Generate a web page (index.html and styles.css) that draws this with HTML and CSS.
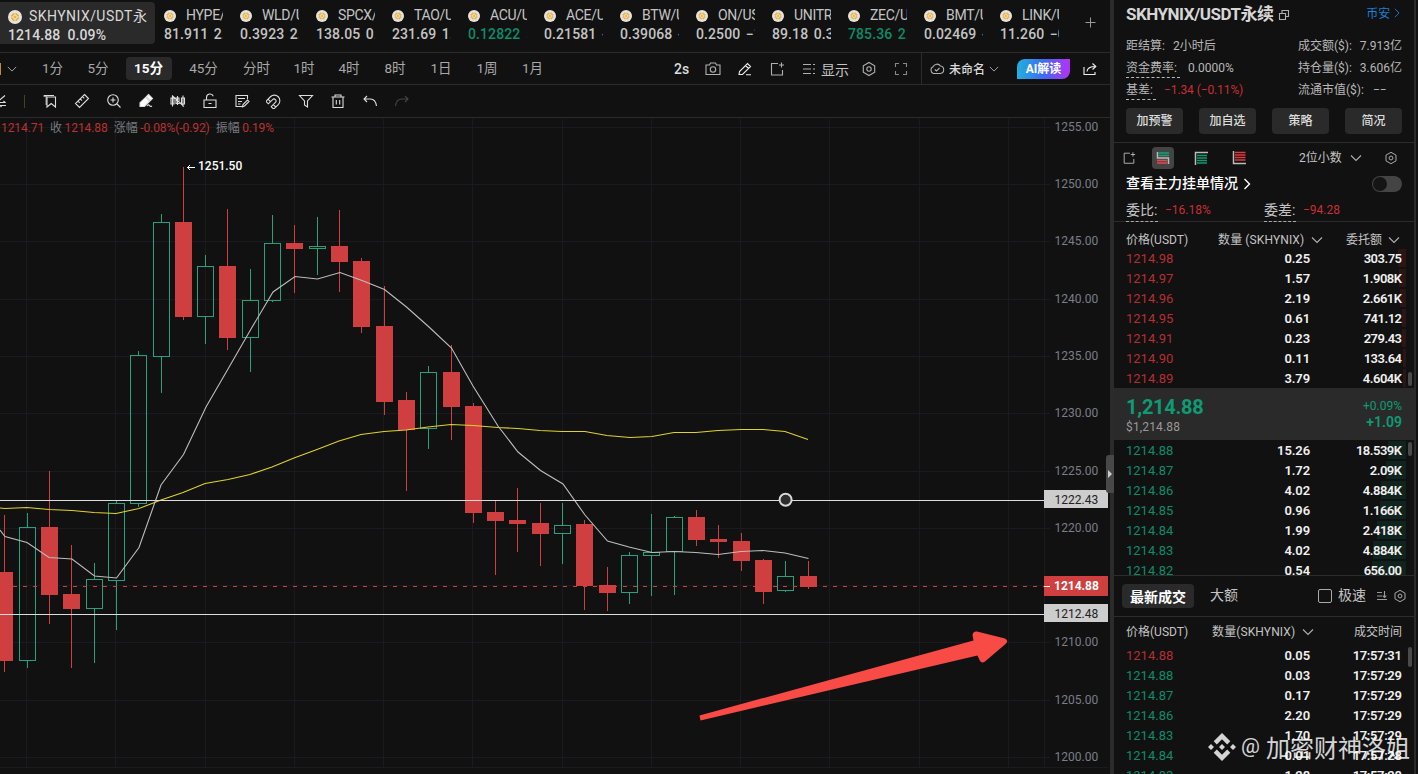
FILE: index.html
```html
<!DOCTYPE html>
<html lang="zh-CN">
<head>
<meta charset="utf-8">
<title>SKHYNIX/USDT永续</title>
<link rel="stylesheet" href="styles.css">
</head>
<body>
<svg class="defs" width="0" height="0">
  <symbol id="coin" viewBox="0 0 14 14"><circle cx="7" cy="7" r="7" fill="#e4e4e4"/><path d="M7 2.600 11.400 7 7 11.400 2.600 7Z" fill="none" stroke="#efb02c" stroke-width="1.700" stroke-dasharray="4.400 1.800" stroke-dashoffset="-.9"/><path d="M7 5.200 8.800 7 7 8.800 5.200 7Z" fill="#efb02c"/></symbol>
  <symbol id="chev" viewBox="0 0 12 12"><path d="M1 3.500 6 8.500 11 3.500"/></symbol>
  <symbol id="right" viewBox="0 0 12 12"><path d="M3.500 1 8.500 6 3.500 11"/></symbol>
  <symbol id="hex" viewBox="0 0 16 16"><path d="M8 1.500 13.700 4.700V11.300L8 14.500 2.300 11.300V4.700Z"/><circle cx="8" cy="8" r="2.200"/></symbol>
  <symbol id="boxplus" viewBox="0 0 16 16"><path d="M9 2.500H2.500V14H13.500V9M12.500 1.500V6.500M10 4H15"/></symbol>
  <symbol id="bookmark" viewBox="0 0 16 16"><path d="M1.500 2H5V12H3.500V4H1.500Z" fill="#999" stroke="none"/><path d="M2 2.500H12M5 4H13.500V14L9.200 10.500 5 14Z"/></symbol>
  <symbol id="ruler" viewBox="0 0 16 16"><path d="M10.500 1.500 14.500 5.500 5.500 14.500 1.500 10.500ZM8.500 3.700 10.200 5.400M6.300 5.900 8 7.600M4 8.200 5.700 9.900"/></symbol>
  <symbol id="zoomin" viewBox="0 0 16 16"><circle cx="7" cy="7" r="5.300"/><path d="M11 11 14.500 14.500M4.500 7H9.500M7 4.500V9.500"/></symbol>
  <symbol id="brush" viewBox="0 0 16 16"><path d="M10.500 1.500 14.500 5.500 12.500 7.500 8.500 3.500ZM7.800 4.300 11.700 8.200 6.500 13.500H2V9.800Z" fill="#fff"/><path d="M9 13Q10.500 11 11.500 12.500T14 13"/></symbol>
  <symbol id="candles" viewBox="0 0 16 16"><path d="M2.500 2.500V13.500M1 5H4V11H1ZM7.500 3V12M6 5H9V10.500H6ZM13 2.500V13.500M11.500 5H14.500V11H11.500ZM2 2.500 14 13.500"/></symbol>
  <symbol id="lock" viewBox="0 0 16 16"><path d="M2 7H14V14.500H2ZM4.500 7V4.500A3.500 3.500 0 0 1 11.300 3.300M6.500 10.500H9.500"/></symbol>
  <symbol id="note" viewBox="0 0 16 16"><path d="M8 13.500H2V2.500H13.500V6M4 5.500H11M4 8.500H8M4 11H6.500M8.500 13.800 9 11.500 13.500 7 15 8.500 10.500 13Z"/></symbol>
  <symbol id="magnet" viewBox="0 0 16 16"><g transform="rotate(45 8 8)"><path d="M2.500 14V7.500A5.500 5.500 0 0 1 13.500 7.500V14H10V8A2 2 0 0 0 6 8V14ZM2.500 11H6M10 11H13.500"/></g></symbol>
  <symbol id="filter" viewBox="0 0 16 16"><path d="M1.500 2.500H14.500L9.500 8V14L6.500 12V8Z"/></symbol>
  <symbol id="trash" viewBox="0 0 16 16"><path d="M1.500 4H14.500M5 4V2H11V4M3 4V14.500H13V4M6.300 7V11.500M9.700 7V11.500"/></symbol>
  <symbol id="undo" viewBox="0 0 16 16"><path d="M5 3 2 6 5 9M2 6H8.500Q13.500 6 14.500 13"/></symbol>
  <symbol id="camera" viewBox="0 0 16 16"><path d="M1 4H4.500L5.500 2H10.500L11.500 4H15V13.500H1Z"/><circle cx="8" cy="8.500" r="2.700"/></symbol>
  <symbol id="pencil" viewBox="0 0 16 16"><path d="M2 13.500 2.500 10.500 10.500 2.500 13.500 5.500 5.500 13.500ZM8.500 4.500 11.500 7.500M9 13.700H14"/></symbol>
  <symbol id="full" viewBox="0 0 16 16"><path d="M2.500 6V2.500H6M10 2.500H13.500V6M13.500 10V13.500H10M6 13.500H2.500V10"/></symbol>
  <symbol id="list" viewBox="0 0 16 16"><path d="M2 3.500H10M2 8H10M2 12.500H10M12 3.500H14M12 8H14M12 12.500H14"/></symbol>
  <symbol id="cloud" viewBox="0 0 16 16"><path d="M4.500 12.500A3.600 3.600 0 0 1 4 5.800 4.300 4.300 0 0 1 11.500 5 3.800 3.800 0 0 1 11.500 12.500ZM5.800 8.500 7.500 10 10.500 7"/></symbol>
  <symbol id="export" viewBox="0 0 16 16"><path d="M2 6V13.500H13V11M5 10.500Q5.500 5.500 13.500 5.500M10.500 2.500 13.800 5.500 10.500 8.500"/></symbol>
  <symbol id="copy" viewBox="0 0 12 12"><path d="M4 4V1.500H10.500V7.500H8M1.500 4.500H7.500V10.500H1.500Z"/></symbol>
</svg>

<div class="app">
  <main class="left">
    <header class="tabs">
      <div class="tab tab-on">
        <div class="t1"><svg class="coin big"><use href="#coin"/></svg><span class="name">SKHYNIX/USDT永</span></div>
        <div class="t2">1214.88&nbsp; 0.09%</div>
      </div>
      <div class="tab-list" id="tabs"></div>
      <svg class="plus" viewBox="0 0 12 12"><path d="M6 .5V11.500M.5 6H11.500"/></svg>
    </header>

    <nav class="periods">
      <span class="edge"></span>
      <svg class="i12 mut"><use href="#chev"/></svg>
      <div class="period-list">
        <span>1分</span><span>5分</span><span class="on">15分</span><span>45分</span><span>分时</span><span>1时</span><span>4时</span><span>8时</span><span>1日</span><span>1周</span><span>1月</span>
      </div>
      <div class="acts">
        <b class="sec">2s</b>
        <svg class="i16 cell"><use href="#camera"/></svg>
        <svg class="i16 cell hi"><use href="#pencil"/></svg>
        <svg class="i16 cell"><use href="#boxplus"/></svg>
        <svg class="i16 lst"><use href="#list"/></svg>
        <span class="show">显示</span>
        <svg class="i16 cell"><use href="#hex"/></svg>
        <svg class="i16 cell dim"><use href="#full"/></svg>
        <span class="vline"></span>
        <svg class="i16 cloud"><use href="#cloud"/></svg>
        <span class="unnamed">未命名</span>
        <svg class="i10"><use href="#chev"/></svg>
        <span class="ai">AI解读</span>
        <svg class="i16 exp hi"><use href="#export"/></svg>
      </div>
    </nav>

    <div class="tools">
      <svg class="cut" viewBox="0 0 10 16"><path d="M-2 10 7 2.500M1 9.500H7L5.500 8M8 12.500H2L3.500 14"/></svg>
      <span class="sep"></span>
      <svg class="i16"><use href="#bookmark"/></svg>
      <svg class="i16"><use href="#ruler"/></svg>
      <svg class="i16"><use href="#zoomin"/></svg>
      <svg class="i16"><use href="#brush"/></svg>
      <svg class="i16"><use href="#candles"/></svg>
      <svg class="i16"><use href="#lock"/></svg>
      <svg class="i16"><use href="#note"/></svg>
      <svg class="i16"><use href="#magnet"/></svg>
      <svg class="i16"><use href="#filter"/></svg>
      <svg class="i16"><use href="#trash"/></svg>
      <svg class="i16"><use href="#undo"/></svg>
      <svg class="i16 redo"><use href="#undo"/></svg>
    </div>

    <section class="chart">
      <svg id="chart" width="1110" height="656" viewBox="0 118 1110 656"></svg>
      <p class="legend"><i>1214.71</i><span>收</span><i>1214.88</i><span>涨幅</span><i>-0.08%(-0.92)</i><span>振幅</span><i>0.19%</i></p>
    </section>
  </main>

  <div class="split"><span class="handle"><svg width="4" height="8"><path d="M0 0 4 4 0 8Z" fill="#ccc"/></svg></span></div>

  <aside class="side">
    <section class="info">
      <div class="title"><h1>SKHYNIX/USDT永续</h1><svg class="i12 copy"><use href="#copy"/></svg><a>币安</a><svg class="i10 blue"><use href="#right"/></svg></div>
      <div class="row"><span class="lab">距结算:</span><span class="v1">2小时后</span><span class="rl">成交额($):</span><span class="rv">7.913亿</span></div>
      <div class="row"><span class="lab dash">资金费率:</span><span class="v2">0.0000%</span><span class="rl">持仓量($):</span><span class="rv">3.606亿</span></div>
      <div class="row"><span class="lab dash short">基差:</span><span class="v3 red">−1.34 (−0.11%)</span><span class="rl">流通市值($):</span><span class="rn">−−</span></div>
      <div class="btns"><button>加预警</button><button>加自选</button><button>策略</button><button>简况</button></div>
    </section>
    <section class="depth-head">
      <div class="modes">
        <svg class="m0"><use href="#boxplus"/></svg>
        <span class="mode on"><svg width="14" height="14"><path d="M1.500 1V7H12.500V13" class="ln"/><path d="M3 2H13M3 4.500H13" stroke="#16a07a"/><path d="M1 9.500H11M1 12H11" stroke="#e5484d"/></svg></span>
        <span class="mode m2"><svg width="14" height="14"><path d="M1.500 14V1.500H14" class="ln"/><path d="M3 4.500H13M3 7H13M3 9.500H13M3 12H13" stroke="#0f9a72"/></svg></span>
        <span class="mode m3"><svg width="14" height="14"><path d="M1.500 0V12.500H14" class="ln"/><path d="M3 1.500H13.500M3 4H13.500M3 6.500H13.500M3 9H13.500" stroke="#e03a3f"/></svg></span>
        <span class="dec">2位小数</span><svg class="i12 c1"><use href="#chev"/></svg><svg class="h14"><use href="#hex"/></svg>
      </div>
      <div class="main-orders"><b>查看主力挂单情况</b><svg class="i12 white"><use href="#right"/></svg><span class="toggle"></span></div>
      <div class="ratio"><span class="rb">委比:</span><span class="red n1">−16.18%</span><span class="rb">委差:</span><span class="red n2">−94.28</span></div>
    </section>
    <div class="cols"><span>价格(USDT)</span><span class="q1">数量 (SKHYNIX)</span><svg class="i12"><use href="#chev"/></svg><span class="amt">委托额</span><svg class="i12 end"><use href="#chev"/></svg></div>
    <div class="book asks" id="asks"></div>
    <div class="last">
      <div><strong>1,214.88</strong><small>$1,214.88</small></div>
      <div class="chg"><span>+0.09%</span><b>+1.09</b></div>
    </div>
    <div class="book bids" id="bids"></div>
    <div class="ttabs"><b>最新成交</b><span class="big-t">大额</span><i class="check"></i><span>极速</span><svg class="sort" width="10" height="10"><path d="M0 1.500H5M0 5H5M0 8.500H10M7.500 0V6.500M5.700 4.700 7.500 6.500 9.300 4.700"/></svg><svg class="h14"><use href="#hex"/></svg></div>
    <div class="cols tcols"><span>价格(USDT)</span><span class="q2">数量(SKHYNIX)</span><svg class="i12"><use href="#chev"/></svg><span class="time">成交时间</span></div>
    <div class="book trades" id="trades"></div>
    <div class="watermark"><svg width="28" height="28" viewBox="0 0 28 28"><path d="M14 0 22.300 8.300 19.200 11.400 14 6.200 8.800 11.400 5.700 8.300ZM3 11 6 14 3 17 0 14ZM25 11 28 14 25 17 22 14ZM14 11 17 14 14 17 11 14ZM5.700 19.700 8.800 16.600 14 21.800 19.200 16.600 22.300 19.700 14 28Z"/></svg><em>@</em><span>加密财神洛姐</span></div>
  </aside>
  <div class="rim"></div>
</div>
<script src="app.js"></script>
</body>
</html>
```

FILE: styles.css
```css
* { box-sizing: border-box; }
body { margin: 0; background: #111; color: #c4c4c4; font-family: Roboto, "Noto Sans CJK SC", sans-serif; font-size: 12px; overflow: hidden; }
svg { fill: none; stroke: #b0b0b0; stroke-width: 1.1; flex: none; display: block; }
i, em { font-style: normal; }
.defs { position: absolute; }
.app { display: grid; grid-template-columns: 1110px 4px 300px 4px; width: 1418px; height: 774px; overflow: hidden; }
.left { display: flex; flex-direction: column; overflow: hidden; }
.i16 { width: 16px; height: 16px; }
.i12 { width: 12px; height: 12px; }
.i10 { width: 10px; height: 10px; }
.h14 { width: 14px; height: 14px; }

/* symbol tabs */
.tabs { height: 53px; border-bottom: 1px solid #2b2b2b; display: flex; padding-top: 2px; font-size: 14px; }
.tab { white-space: nowrap; overflow: hidden; width: 59px; height: 42px; padding-top: 4px; }
.tab-on { width: 155px; background: #2a2a2a; border-radius: 0 4px 4px 0; padding: 5px 8px 0; color: #d8d8d8; }
.t1 { display: flex; align-items: center; height: 19px; gap: 10px; }
.tab-on .t1 { gap: 7px; }
.name { letter-spacing: .45px; line-height: 19px; overflow: hidden; }
.tab-list .name { letter-spacing: -.3px; }
.t2 { line-height: 18px; height: 18px; font-weight: 500; letter-spacing: .1px; }
.tab-list .t2 { word-spacing: -.8px; line-height: 19px; }
.coin { width: 12px; height: 12px; stroke: none; }
.coin.big { width: 14px; height: 14px; }
.tab-list { display: flex; gap: 17px; margin-left: 9px; }
.up { color: #0b8c68; }
.plus { width: 11px; height: 11px; margin: 15px 0 0 26px; stroke: #999; }

/* period bar */
.periods { height: 32px; border-bottom: 1px solid #2b2b2b; display: flex; align-items: center; font-size: 14px; }
.edge { width: 1px; height: 12px; background: #c08a3e; }
.periods > .i12 { width: 10px; height: 10px; margin-left: 6px; }
.period-list { display: grid; grid-template-columns: 36px 37px 46px 46px 42px 35px 37px 37px 37px 37px 36px; gap: 9px; margin-left: 17.5px; text-align: center; line-height: 23px; font-size: 13.5px; }
.period-list span { white-space: nowrap; color: #a9a9a9; }
.period-list .on { background: #2a2a2a; border-radius: 4px; color: #fff; font-weight: 700; }
.acts { display: flex; align-items: center; margin-left: auto; width: 436px; height: 31px; }
.sec { font-weight: 500; color: #ddd; width: 23px; font-size: 14px; }
.cell { margin: 0 8px; }
.acts .lst { margin: 0 4px 0 8px; stroke-width: 1; }
.show { width: 28px; margin-right: 4px; white-space: nowrap; }
.hi { stroke: #eee; }
.dim { stroke: #888; }
.vline { width: 1px; height: 31px; background: #2b2b2b; margin-left: 4px; }
.cloud { margin: 0 4px 0 7px; }
.unnamed { font-size: 12px; font-weight: 500; color: #ddd; width: 36px; white-space: nowrap; }
.acts .i10 { margin-left: 4px; }
.ai { margin-left: 18px; width: 53px; height: 20px; border-radius: 8px 0 8px 0; background: linear-gradient(90deg, #22b0dc, #3d6cf5 50%, #b531f5); color: #fff; font-weight: 700; font-size: 12px; line-height: 20px; text-align: center; white-space: nowrap; }
.exp { margin-left: 12px; }

/* drawing tools */
.tools { height: 33px; border-bottom: 1px solid #2b2b2b; display: flex; align-items: center; gap: 16px; }
.tools svg { stroke: #ddd; }
.tools .cut { width: 10px; height: 16px; margin: 0 0 0 -2px; }
.tools .sep { width: 1px; height: 13px; background: #45402e; margin-right: 1px; }
.tools .redo { transform: scaleX(-1); stroke: #444; }
.chart { position: relative; height: 656px; }
.chart text { font-family: Roboto, sans-serif; font-size: 12px; stroke: none; fill: #7b7e88; }
.chart .hl { fill: #fff; font-weight: 500; }
.chart .dark { fill: #222; }
.legend { position: absolute; left: 1px; top: 2px; margin: 0; line-height: 16px; color: #777b80; white-space: nowrap; display: flex; }
.legend i { color: #b9322f; margin-right: 6px; letter-spacing: -.08px; }
.legend span { margin-right: 2.5px; }

.split { background: #2b2b2b; position: relative; }
.handle { position: absolute; left: -4px; top: 455px; width: 8px; height: 38px; background: #484848; border-radius: 3px 0 0 3px; display: flex; align-items: center; justify-content: center; }
.handle svg { stroke: none; }
.rim { border-left: 2px solid #2b2b2b; }

/* side panel */
.side { position: relative; display: flex; flex-direction: column; overflow: hidden; white-space: nowrap; }
.info { height: 142px; padding: 0 12px; }
.title { display: flex; align-items: center; height: 30px; }
h1 { margin: 0; font-size: 17px; line-height: 29px; height: 30px; font-weight: 700; width: 154px; color: #d6d6d6; letter-spacing: -.5px; }
.title a { margin-left: 76px; color: #1c7fd6; width: 26px; line-height: 28px; height: 30px; }
.blue { stroke: #1c7fd6; margin-bottom: 4px; }
.row { display: flex; height: 22px; line-height: 23px; align-items: flex-start; color: #b8b8b8; }
.title + .row { margin-top: 5px; }
.lab { width: 47px; }
.dash { width: 54px; height: 21px; border-bottom: 1px dashed #b8b8b8; }
.dash.short { width: 30px; }
.v1 { width: 125px; }
.v2 { width: 110px; margin-left: 8px; }
.v3 { width: 134px; margin-left: 8px; letter-spacing: -.1px; }
.rv { margin-left: auto; }
.rn { margin-left: 9px; }
.red { color: #c92f33; }
.btns { display: grid; grid-template-columns: repeat(4, 57px); gap: 16px; margin-top: 7px; }
button { height: 26px; padding: 0; border: 0; border-radius: 4px; background: #2a2a2a; color: #ddd; font: 500 12px/26px Roboto, "Noto Sans CJK SC", sans-serif; }
.depth-head { height: 80px; border-top: 1px solid #2b2b2b; border-bottom: 1px solid #2b2b2b; padding-left: 12px; padding-right: 12px; }
.modes { display: flex; align-items: center; height: 30px; }
.m0 { width: 14px; height: 14px; margin: 0 16px 0 -4px; }
.mode { width: 22px; height: 22px; display: flex; align-items: center; justify-content: center; border-radius: 4px; }
.mode svg { stroke-width: 1.5; }
.mode.on { background: #444; }
.m2 { margin-left: 16px; }
.m3 { margin-left: 16px; }
.mode .ln { stroke: #bbb; }
.dec { margin-left: 49px; width: 51px; line-height: 20px; padding-bottom: 1px; }
.modes .h14 { margin-left: 22px; }
.main-orders { display: flex; align-items: center; height: 22px; font-size: 14px; color: #fff; }
.main-orders b { width: 115px; font-weight: 500; line-height: 20px; padding-bottom: 2px; }
.white { stroke: #fff; stroke-width: 1.4; }
.toggle { margin-left: auto; width: 30px; height: 16px; border-radius: 8px; background: #444; padding: 1px; }
.toggle::before { content: ""; display: block; width: 14px; height: 14px; border-radius: 50%; background: #151515; }
.ratio { display: flex; height: 27px; line-height: 30px; }
.rb { font-size: 14px; width: 32px; height: 27px; border-bottom: 1px dashed #aaa; }
.n1 { margin-left: 7px; width: 99px; }
.n2 { margin-left: 7px; }
.cols { height: 26px; padding: 9px 12px 0; display: flex; align-items: center; line-height: 18px; }
.q1 { margin-left: 30px; width: 93px; letter-spacing: .1px; }
.amt { margin-left: auto; }
.cols .end { margin: 0 2px 0 6px; }
.q2 { margin-left: 24px; width: 90px; letter-spacing: .1px; }
.time { margin-left: auto; }
.book { position: relative; padding-right: 8px; overflow: hidden; }
.asks { height: 140px; }
.bids { height: 135px; }
.line { display: grid; grid-template-columns: 60px 124px 92px; height: 20px; line-height: 21px; font-size: 13px; padding-left: 12px; position: relative; }
.line b { font-weight: 600; color: #f0f0f0; text-align: right; z-index: 1; letter-spacing: -.1px; }
.line b:nth-child(3) { letter-spacing: -.5px; padding-right: .5px; }
.trades .line b:nth-child(3) { letter-spacing: -.35px; }
.line .bar { position: absolute; right: 0; top: 1px; height: 18px; background: #2a1517; }
.bids .bar { background: #10241f; }
.dn { color: #b52f32; }
.book::after { content: ""; position: absolute; right: 2px; width: 4px; border-radius: 2px; background: #4a4a4a; }
.asks::after { top: 124px; height: 14px; }
.bids::after { top: 2px; height: 14px; }
.trades::after { top: 2px; height: 20px; }
.last { height: 52px; background: #2a2a2a; display: flex; justify-content: space-between; padding: 8px 12px 0; }
.last strong { display: block; font-size: 20px; line-height: 22px; color: #0e9b73; letter-spacing: -.25px; }
.last small { display: block; font-size: 12px; line-height: 18px; color: #999; letter-spacing: .15px; }
.chg { display: flex; flex-direction: column; text-align: right; color: #0e9b73; padding-top: 2px; }
.chg span { line-height: 16px; }
.chg b { font-size: 14px; line-height: 17px; font-weight: 600; }
.ttabs { height: 42px; border-top: 1px solid #2b2b2b; border-bottom: 1px solid #2b2b2b; display: flex; align-items: center; padding: 0 7px 0 8px; font-size: 14px; line-height: 20px; }
.ttabs b { width: 72px; height: 24px; line-height: 26px; background: #2a2a2a; border-radius: 4px; text-align: center; color: #fff; font-weight: 700; }
.ttabs span { padding-bottom: 2px; }
.big-t { margin-left: 16px; width: 108px; }
.check { width: 14px; height: 14px; border: 1px solid #aaa; border-radius: 2px; margin-right: 6px; }
.sort { margin-left: 11px; stroke: #999; }
.ttabs .h14 { margin-left: auto; }
.tcols { height: 28px; padding-top: 2px; }
.trades { height: 129px; }
.watermark { position: absolute; left: 94px; top: 733px; z-index: 3; display: flex; align-items: center; height: 28px; color: #fff; opacity: .82; font-size: 24px; }
.watermark svg { fill: #fff; stroke: none; }
.watermark em { width: 19px; margin: -3px 6px 0 5px; font-size: 21px; }
.watermark span { margin-top: -2px; }
```

FILE: app.js
```js
const tabs = [['HYPE/U','81.911  2.1'],['WLD/U','0.3923  2.1'],['SPCX/U','138.05  0.4'],['TAO/U','231.69  1.2'],['ACU/U','0.12822  5',1],['ACE/U','0.21581  -1'],['BTW/U','0.39068  -1'],['ON/US','0.2500  −1'],['UNITR','89.18  0.3'],['ZEC/U','785.36  2.',1],['BMT/U','0.02469  -'],['LINK/U','11.260  −0.']];
document.getElementById('tabs').innerHTML = tabs.map(([n, v, up]) =>
  `<div class="tab"><div class="t1"><svg class="coin"><use href="#coin"/></svg><span class="name">${n}</span></div><div class="t2 ${up ? 'up' : ''}">${v.replace(/ /g, '&nbsp;')}</div></div>`).join('');

const book = (id, rows, cls) => {
  document.getElementById(id).innerHTML = rows.map(([p, q, a, w, c]) =>
    `<div class="line"><span class="${c || cls}">${p}</span><b>${q}</b><b>${a}</b>${w ? `<i class="bar" style="width:${w}px"></i>` : ''}</div>`).join('');
};
book('asks', [['1214.98','0.25','303.75',8],['1214.97','1.57','1.908K',7],['1214.96','2.19','2.661K',6],['1214.95','0.61','741.12',4],['1214.91','0.23','279.43',4],['1214.90','0.11','133.64',3],['1214.89','3.79','4.604K',3]], 'dn');
book('bids', [['1214.88','15.26','18.539K',18],['1214.87','1.72','2.09K',20],['1214.86','4.02','4.884K',25],['1214.85','0.96','1.166K',26],['1214.84','1.99','2.418K',29],['1214.83','4.02','4.884K',33],['1214.82','0.54','656.00',34]], 'up');
book('trades', [['1214.88','0.05','17:57:31',0,'dn'],['1214.88','0.03','17:57:29'],['1214.87','0.17','17:57:29'],['1214.86','2.20','17:57:29'],['1214.83','1.70','17:57:29'],['1214.84','0.01','17:57:28'],['1214.83','1.28','17:57:28']], 'up');

// candle: x, high, low, body top, body bottom, rising
const candles = [[4,515,672,572,661,0],[27,513,668,527,661,1],[49,471,624,527,595,0],[71,545,668,594,609,0],[94,563,663,579,609,1],[116,500,630,503,581,1],[138,351,507,355,504,1],[161,214,393,222,357,1],[183,167,320,222,317,0],[205,255,344,266,317,1],[227,209,350,266,338,0],[250,269,372,300,338,1],[272,215,302,243,301,1],[294,225,293,243,249,0],[317,217,275,246,249,1],[339,210,292,246,262,0],[361,258,333,261,327,0],[384,286,415,326,402,0],[406,392,491,400,430,0],[428,366,449,372,429,1],[451,345,440,372,407,0],[473,403,523,406,513,0],[495,501,575,512,521,0],[517,488,552,520,524,0],[540,503,566,523,534,0],[562,503,564,525,534,1],[584,520,610,524,586,0],[607,567,611,585,593,0],[629,552,604,555,593,1],[651,514,596,552,556,1],[674,516,595,517,552,1],[696,510,546,517,540,0],[718,525,558,539,542,0],[741,533,571,541,561,0],[763,559,604,560,592,0],[785,561,592,576,591,1],[808,561,589,576,587,0]];
const ma = '0,530 5,536.5 27,542.5 49,557.5 72,559 94.5,576 116.5,578 139,547.5 161,485 183.5,454.5 206,407 228,369 251,329 273,292 295,276.5 317.5,279 340,272.5 362,280.5 384.5,289.5 406.5,307 429,327 451.5,348 473,386 498,426 518,452 540.5,470.5 563,484 585,515 607.5,541 629,547 652,552.5 674,551.5 696,552.5 718,554.5 741,551.5 763,550.5 785,553 808.5,558.5';
const slow = '0,508 5,508.5 27,507.5 49,509.5 72,510.5 94,512.5 116,513.5 139,508.5 161,500 183,492.5 205,483.5 228,479.5 250,474.5 272,467 294,458 317,449.5 339,441 361,434.5 384,431.5 406,430 428,427 451,424.5 473,425.5 498,427.5 518,428.5 540,430.5 562,431.5 585,431.5 607,435.5 630,437.5 652,436.5 674,432.5 696,432.5 718,430.5 741,429.5 763,429.5 785,431.5 808,439.5';
const R = (x, y, w, h, f) => `<rect x="${x}" y="${y}" width="${w}" height="${h}" fill="${f}" stroke="none"/>`;
let s = '';
[26,115,205,294,383,472,562,651,740,829,919,1008,1044].forEach(x => s += R(x, 119, 1, 649, '#1b1b1f'));
[127,184,241,299,356,413,471,528,585,642,700,757].forEach((y, i) => {
  s += R(0, y, 1050, 1, '#1b1b1f');
  if (i !== 8) s += `<text x="1054.5" y="${y + 4}">${1255 - i * 5}.00</text>`;
});
s += R(0, 767, 1108, 1, '#1b1b1f');
candles.forEach(([x, h, l, t, b, up]) => {
  const c = up ? '#26a17b' : '#d03f3f';
  if (up) {
    s += R(x, h, 1, t - h, c) + R(x, b, 1, l - b, c);
    s += `<rect x="${x - 7.5}" y="${t + .5}" width="16" height="${b - t - 1}" stroke="${c}" stroke-width="1"/>`;
  } else s += R(x, h, 1, l - h, c) + R(x - 8, t, 17, b - t, c);
});
s += `<polyline points="${slow}" stroke="#e0d22c"/><polyline points="${ma}" stroke="#bdbdbd"/>`;
s += '<path d="M3 586.500H1044" stroke="#d03f3f" stroke-width="1" stroke-dasharray="4 6"/>';
s += R(0, 500, 1044, 1, '#ddd') + R(0, 614, 1044, 1, '#ddd');
s += '<circle cx="785.600" cy="499.800" r="6" fill="#2d2d2d" stroke="#d8d8d8" stroke-width="2"/>';
s += R(1044, 490, 64, 18, '#cdcdcd') + R(1044, 576, 64, 20, '#d03f3f') + R(1044, 604, 64, 18, '#cdcdcd') + R(1044, 586, 6, 1, '#fff');
s += '<text class="dark" x="1054.500" y="504">1222.43</text><text class="dark" x="1054.500" y="618">1212.48</text><text class="hl" x="1054" y="590" style="font-weight:700">1214.88</text>';
s += '<path d="M187 167.500H195M190 165 187.500 167.500 190 170" stroke="#fff" stroke-width="1"/><text class="hl" x="198" y="170">1251.50</text>';
s += '<path d="M699.500 715.500 973.500 640.500 972.500 635Q973 631 977 631.500L1005 638.500Q1009 641 1005.500 644L985 661.500Q981 664 979.500 660L977.500 655.500 700.500 720.500Z" fill="#f94b46" stroke="none"/>';
document.getElementById('chart').innerHTML = s;
```
